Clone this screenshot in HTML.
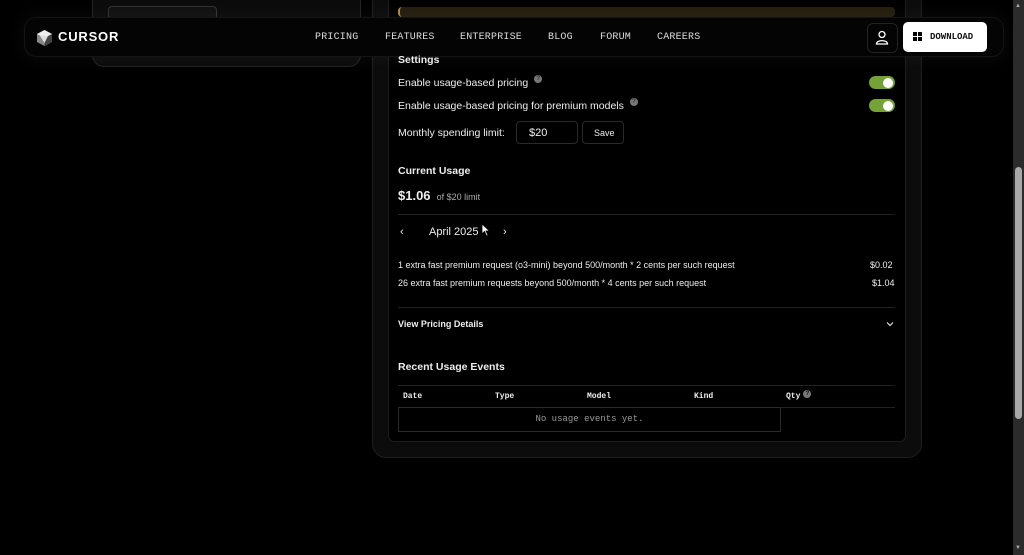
<!DOCTYPE html>
<html><head><meta charset="utf-8"><style>
*{box-sizing:border-box;margin:0;padding:0}
body{width:1024px;height:555px;background:#000;overflow:hidden;position:relative;font-family:"Liberation Sans",sans-serif;color:#eee}
.abs{position:absolute}
.mono{font-family:"Liberation Mono",monospace}
.left{left:92px;top:-20px;width:269px;height:87px;background:#0b0b0b;border:1px solid #222;border-radius:12px}
.outer{left:372px;top:-20px;width:550px;height:478px;background:#0c0c0c;border:1px solid #1e1e1e;border-radius:14px}
.inner{left:388px;top:-20px;width:518px;height:462px;background:#000;border:1px solid #1c1c1c;border-radius:6px}
.nav{left:24px;top:17px;width:980px;height:40px;background:#040404;border:1px solid #141414;border-radius:12px;box-shadow:0 0 20px rgba(255,255,255,0.05)}
.nav .links span{position:absolute;top:14px;font-size:10px;color:#ddd;font-family:"Liberation Mono",monospace;letter-spacing:0.2px}
.t{font-size:10.5px;color:#eee}
.q{display:inline-block;width:8px;height:8px;border-radius:50%;background:#777;color:#111;font-size:6px;text-align:center;line-height:8px;vertical-align:top;margin-left:6px;margin-top:-2px}
.tog{width:26px;height:13px;border-radius:7px;background:#74a236}
.tog::after{content:"";position:absolute;right:2px;top:1.5px;width:10px;height:10px;border-radius:50%;background:#fff}
.line{height:1px;background:#222}
</style></head><body>
<div class="abs left"></div>
<div class="abs" style="left:108px;top:6px;width:109px;height:14px;border:1px solid #333;border-radius:4px;background:#111"></div>
<div class="abs outer"></div>
<div class="abs inner"></div>
<div class="abs" style="left:398px;top:7px;width:497px;height:10px;background:#241d0e;border-radius:4px;border-left:2px solid #b08a3a"></div>

<div class="abs nav">
  <svg class="abs" style="left:11px;top:11px" width="17" height="18" viewBox="0 0 17 18"><path d="M8.5 1 L16 5 L16 13 L8.5 17 L1 13 L1 5Z" fill="#888"/><path d="M1 5 L8.5 9 L16 5 L8.5 1Z" fill="#eee"/><path d="M8.5 9 L16 5 L16 13 L8.5 17Z" fill="#444"/><path d="M4 7 L12 7 L8.5 14Z" fill="#ddd"/></svg>
  <div class="abs" style="left:33px;top:11px;font-size:13px;font-weight:bold;letter-spacing:0.8px;color:#fff">CURSOR</div>
  <div class="links">
    <span style="left:290px">PRICING</span><span style="left:360px">FEATURES</span><span style="left:435px">ENTERPRISE</span><span style="left:523px">BLOG</span><span style="left:575px">FORUM</span><span style="left:632px">CAREERS</span>
  </div>
  <div class="abs" style="left:842px;top:5px;width:31px;height:30px;border:1px solid #222;border-radius:6px"></div>
  <svg class="abs" style="left:850px;top:12px" width="14" height="15" viewBox="0 0 14 15"><circle cx="7" cy="4.5" r="3" fill="none" stroke="#fff" stroke-width="1.3"/><path d="M1.5 14 C1.5 9.5 12.5 9.5 12.5 14Z" fill="none" stroke="#fff" stroke-width="1.3"/></svg>
  <div class="abs" style="left:878px;top:4px;width:84px;height:30px;background:#fff;border-radius:5px"></div>
  <svg class="abs" style="left:888px;top:14px" width="9" height="9" viewBox="0 0 9 9"><rect x="0" y="0" width="4" height="4" fill="#000"/><rect x="5" y="0" width="4" height="4" fill="#000"/><rect x="0" y="5" width="4" height="4" fill="#000"/><rect x="5" y="5" width="4" height="4" fill="#000"/></svg>
  <div class="abs mono" style="left:905px;top:14px;font-size:9px;font-weight:bold;color:#111">DOWNLOAD</div>
</div>

<div class="abs t" style="left:398px;top:54px;font-weight:bold">Settings</div>
<div class="abs t" style="left:398px;top:77px">Enable usage-based pricing<span class="q">?</span></div>
<div class="abs tog" style="left:869px;top:76px"></div>
<div class="abs t" style="left:398px;top:100px">Enable usage-based pricing for premium models<span class="q">?</span></div>
<div class="abs tog" style="left:869px;top:99px"></div>
<div class="abs t" style="left:398px;top:127px">Monthly spending limit:</div>
<div class="abs" style="left:516px;top:121px;width:62px;height:23px;border:1px solid #2a2a2a;border-radius:4px;font-size:11px;padding:5px 12px">$20</div>
<div class="abs" style="left:582px;top:121px;width:42px;height:23px;border:1px solid #2a2a2a;border-radius:4px;font-size:9px;padding:6px 11px">Save</div>

<div class="abs t" style="left:398px;top:165px;font-weight:bold">Current Usage</div>
<div class="abs" style="left:398px;top:188px;font-size:13px;font-weight:bold">$1.06 <span style="font-size:9px;font-weight:normal;color:#aaa">&nbsp;of $20 limit</span></div>
<div class="abs line" style="left:398px;top:214px;width:497px"></div>
<div class="abs" style="left:400px;top:226px;font-size:11px">‹</div>
<div class="abs" style="left:429px;top:226px;font-size:11px">April 2025</div>
<div class="abs" style="left:503px;top:226px;font-size:11px">›</div>
<div class="abs" style="left:398px;top:260px;font-size:9px">1 extra fast premium request (o3-mini) beyond 500/month * 2 cents per such request</div>
<div class="abs" style="left:870px;top:260px;font-size:9px">$0.02</div>
<div class="abs" style="left:398px;top:278px;font-size:9px">26 extra fast premium requests beyond 500/month * 4 cents per such request</div>
<div class="abs" style="left:872px;top:278px;font-size:9px">$1.04</div>
<div class="abs line" style="left:398px;top:307px;width:497px"></div>
<div class="abs" style="left:398px;top:319px;font-size:9px;font-weight:bold">View Pricing Details</div>
<svg class="abs" style="left:886px;top:321px" width="8" height="6" viewBox="0 0 8 6"><path d="M1 1.5 L4 4.5 L7 1.5" fill="none" stroke="#ddd" stroke-width="1.2"/></svg>
<div class="abs t" style="left:398px;top:361px;font-weight:bold">Recent Usage Events</div>
<div class="abs line" style="left:398px;top:385px;width:497px"></div>
<div class="abs mono" style="left:403px;top:392px;font-size:8px;font-weight:bold">Date</div>
<div class="abs mono" style="left:495px;top:392px;font-size:8px;font-weight:bold">Type</div>
<div class="abs mono" style="left:587px;top:392px;font-size:8px;font-weight:bold">Model</div>
<div class="abs mono" style="left:694px;top:392px;font-size:8px;font-weight:bold">Kind</div>
<div class="abs mono" style="left:786px;top:392px;font-size:8px;font-weight:bold">Qty<span class="q" style="margin-left:3px">?</span></div>
<div class="abs line" style="left:398px;top:407px;width:497px"></div>
<div class="abs mono" style="left:398px;top:407px;width:383px;height:25px;border:1px solid #2a2a2a;font-size:9px;color:#999;text-align:center;line-height:23px">No usage events yet.</div>
<svg class="abs" style="left:481px;top:223px" width="10" height="14" viewBox="0 0 10 14"><path d="M1 1 L1 11 L3.5 8.5 L5.5 13 L7 12.3 L5 8 L8.5 8Z" fill="#fff" stroke="#000" stroke-width="0.8"/></svg>

<div class="abs" style="left:1013px;top:0;width:11px;height:555px;background:#2b2b2b"></div>
<div class="abs" style="left:1015px;top:167px;width:7px;height:252px;background:#a8a8a8;border-radius:4px"></div>
<div class="abs" style="left:1015px;top:3px;font-size:6px;color:#aaa">▲</div>
<div class="abs" style="left:1015px;top:545px;font-size:6px;color:#aaa">▼</div>
</body></html>
